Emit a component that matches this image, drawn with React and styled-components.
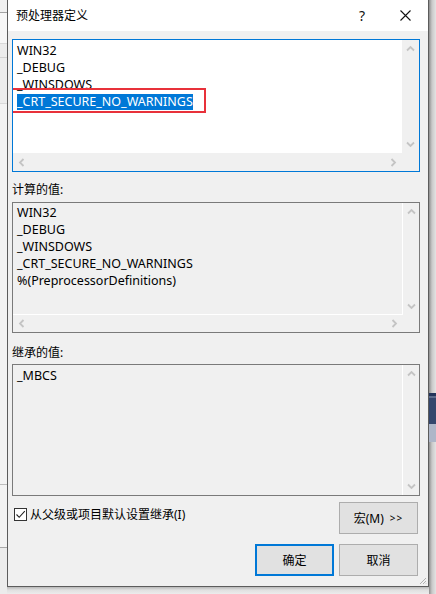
import React from "react";
import styled, { createGlobalStyle } from "styled-components";

const UI_FONT = `"Noto Sans", "Noto Sans CJK SC", sans-serif`;

const GlobalStyle = createGlobalStyle`
  html, body { margin: 0; padding: 0; }
  body { background: #ececec; font-family: ${UI_FONT}; }
  * { box-sizing: border-box; }
`;

const Desktop = styled.div`
  width: 436px;
  height: 594px;
  display: flex;
  overflow: hidden;
  background: #ececec;
`;

const LeftBackdrop = styled.div`
  width: 7px;
  flex: none;
  background: linear-gradient(
    to bottom,
    #f0f0f0 0 12px,
    #a3a3a3 12px 13px,
    #f7f7f7 13px 43px,
    #d9d9d9 43px 44px,
    #ececec 44px 57px,
    #d2d2d2 57px 58px,
    #ececec 58px 103px,
    #d9d9d9 103px 104px,
    #f3f3f3 104px 484px,
    #bdbdbd 484px 485px,
    #f3f3f3 485px 547px,
    #a9a9a9 547px 548px,
    #ececec 548px
  );
`;

const RightBackdrop = styled.div`
  width: 7px;
  flex: none;
  background:
    linear-gradient(
      to bottom,
      transparent 0 393px,
      #22345a 393px 396px,
      #5d6d8c 396px 398px,
      #34466c 398px 424px,
      #aeb6c8 424px 442px,
      transparent 442px
    ),
    linear-gradient(to right, #8e8e8e, #c9c9c9 3px, #e3e3e3);
`;

const DialogColumn = styled.div`
  width: 422px;
  flex: none;
  display: flex;
  flex-direction: column;
`;

const BottomBackdrop = styled.div`
  flex: 1;
  background: linear-gradient(to bottom, #b8b8b8, #e0e0e0 3px, #ececec);
`;

const Dialog = styled.div`
  position: relative;
  height: 587px;
  border: 1px solid #5c5c5c;
  border-top: none;
  background: #f0f0f0;
  display: flex;
  flex-direction: column;
  font-family: ${UI_FONT};
  font-size: 12px;
  color: #000;
`;

const TitleBar = styled.div`
  height: 31px;
  flex: none;
  background: #fff;
  display: flex;
  align-items: center;
  padding-left: 8px;
`;

const TitleText = styled.div`
  flex: 1;
  font-size: 12px;
  line-height: 17px;
  padding-bottom: 1px;
`;

const CaptionButton = styled.div`
  width: ${(p) => p.$w}px;
  height: 31px;
  display: flex;
  align-items: center;
  justify-content: center;
  font-size: 14px;
  color: #111;
`;

const Content = styled.div`
  flex: 1;
  display: flex;
  flex-direction: column;
  padding: 8px 8px 10px 4px;
`;

const Box = styled.div`
  height: ${(p) => p.$h}px;
  flex: none;
  border: 1px solid ${(p) => (p.$active ? "#0078d7" : "#7a7a7a")};
  background: ${(p) => (p.$active ? "#fff" : "#f0f0f0")};
  display: grid;
  grid-template-columns: 1fr ${(p) => (p.$active ? 17 : 16)}px;
  grid-template-rows: ${(p) => (p.$hscroll ? `1fr ${p.$active ? 18 : 17}px` : "1fr")};
`;

const TextArea = styled.div`
  padding: ${(p) => p.$top}px 0 0 4px;
  line-height: 17px;
  font-size: 12.5px;
  white-space: pre;
  overflow: hidden;
  background: ${(p) => (p.$active ? "#fff" : "#f0f0f0")};
  border-right: ${(p) => (p.$active ? "none" : "1px solid #fff")};
  border-bottom: ${(p) => (p.$active || !p.$hscroll ? "none" : "1px solid #fff")};
`;

const Line = styled.div`
  position: relative;
  height: 17px;
`;

const Selected = styled.span`
  display: inline-block;
  background: #0078d7;
  color: #fff;
  line-height: 16px;
  margin-top: 1px;
`;

const Annotation = styled.div`
  position: absolute;
  left: -8px;
  top: -5px;
  width: 197px;
  height: 25px;
  border: 2px solid #e8313a;
  pointer-events: none;
`;

const VScroll = styled.div`
  background: #f0f0f0;
  display: flex;
  flex-direction: column;
  justify-content: space-between;
`;

const HScroll = styled.div`
  background: #f0f0f0;
  display: flex;
  justify-content: space-between;
`;

const Corner = styled.div`
  background: #f0f0f0;
`;

const ArrowCell = styled.div`
  width: ${(p) => (p.$horizontal ? "17px" : "100%")};
  height: ${(p) => (p.$horizontal ? "100%" : "17px")};
  display: flex;
  align-items: center;
  justify-content: center;
`;

const FieldLabel = styled.div`
  line-height: 17px;
  font-size: 12px;
  margin: ${(p) => p.$mt}px 0 ${(p) => p.$mb}px 0;
`;

const OptionsRow = styled.div`
  margin-top: 6px;
  display: flex;
  align-items: flex-start;
  justify-content: space-between;
  padding-right: 2px;
`;

const CheckLabel = styled.label`
  display: flex;
  align-items: center;
  gap: 3px;
  margin-top: 6px;
  margin-left: 2px;
  line-height: 13px;
  font-size: 12px;
`;

const CheckBox = styled.span`
  width: 13px;
  height: 13px;
  border: 1px solid #333;
  background: #fff;
  display: flex;
  align-items: center;
  justify-content: center;
`;

const Button = styled.div`
  width: 79px;
  height: 32px;
  border: ${(p) => (p.$default ? "2px solid #0078d7" : "1px solid #adadad")};
  background: #e1e1e1;
  display: flex;
  align-items: center;
  justify-content: center;
  font-size: 12px;
  gap: 6px;
`;

const Chevrons = styled.span`
  font-size: 10px;
  letter-spacing: 1px;
`;

const ButtonRow = styled.div`
  margin-top: 10px;
  display: flex;
  justify-content: flex-end;
  gap: 5px;
  padding-right: 2px;
`;

const Grip = styled.svg`
  position: absolute;
  right: 1px;
  bottom: 1px;
`;

const ARROW = "#c4c4c4";

const Arrow = ({ dir }) => {
  const pts = {
    up: "1,5.5 4.5,2 8,5.5",
    down: "1,1.5 4.5,5 8,1.5",
    left: "5.5,1 2,4.5 5.5,8",
    right: "1.5,1 5,4.5 1.5,8",
  }[dir];
  const horiz = dir === "left" || dir === "right";
  return (
    <svg width={horiz ? 7 : 9} height={horiz ? 9 : 7} viewBox={horiz ? "0 0 7 9" : "0 0 9 7"}>
      <polyline points={pts} fill="none" stroke={ARROW} strokeWidth="1.8" />
    </svg>
  );
};

function ListBox({ h, active, hscroll, top, children }) {
  return (
    <Box $h={h} $active={active} $hscroll={hscroll}>
      <TextArea $top={top} $active={active} $hscroll={hscroll}>
        {children}
      </TextArea>
      <VScroll>
        <ArrowCell>
          <Arrow dir="up" />
        </ArrowCell>
        <ArrowCell>
          <Arrow dir="down" />
        </ArrowCell>
      </VScroll>
      {hscroll && (
        <>
          <HScroll>
            <ArrowCell $horizontal>
              <Arrow dir="left" />
            </ArrowCell>
            <ArrowCell $horizontal>
              <Arrow dir="right" />
            </ArrowCell>
          </HScroll>
          <Corner />
        </>
      )}
    </Box>
  );
}

const computed = [
  "WIN32",
  "_DEBUG",
  "_WINSDOWS",
  "_CRT_SECURE_NO_WARNINGS",
  "%(PreprocessorDefinitions)",
];

export default function App() {
  return (
    <>
      <GlobalStyle />
      <Desktop>
        <LeftBackdrop />
        <DialogColumn>
          <Dialog>
            <TitleBar>
              <TitleText>预处理器定义</TitleText>
              <CaptionButton $w={40}>?</CaptionButton>
              <CaptionButton $w={46}>
                <svg width="11" height="11" viewBox="0 0 11 11">
                  <path d="M0.5 0.5 L10.5 10.5 M10.5 0.5 L0.5 10.5" stroke="#111" strokeWidth="1.1" />
                </svg>
              </CaptionButton>
            </TitleBar>
            <Content>
              <ListBox h={133} active hscroll top={2}>
                <Line>WIN32</Line>
                <Line>_DEBUG</Line>
                <Line>_WINSDOWS</Line>
                <Line>
                  <Selected>_CRT_SECURE_NO_WARNINGS</Selected>
                  <Annotation />
                </Line>
              </ListBox>

              <FieldLabel $mt={9} $mb={4}>计算的值:</FieldLabel>
              <ListBox h={131} hscroll top={1}>
                {computed.map((t) => (
                  <Line key={t}>{t}</Line>
                ))}
              </ListBox>

              <FieldLabel $mt={11} $mb={3}>继承的值:</FieldLabel>
              <ListBox h={132} top={2}>
                <Line>_MBCS</Line>
              </ListBox>

              <OptionsRow>
                <CheckLabel>
                  <CheckBox>
                    <svg width="11" height="11" viewBox="0 0 11 11">
                      <polyline points="1.5,5.5 4.2,8.3 9.8,2.2" fill="none" stroke="#222" strokeWidth="1.1" />
                    </svg>
                  </CheckBox>
                  从父级或项目默认设置继承(I)
                </CheckLabel>
                <Button>
                  宏(M)<Chevrons>&gt;&gt;</Chevrons>
                </Button>
              </OptionsRow>

              <ButtonRow>
                <Button $default>确定</Button>
                <Button>取消</Button>
              </ButtonRow>
            </Content>
            <Grip width="8" height="8" viewBox="0 0 8 8">
              <path d="M7 1 L1 7 M7 4 L4 7 M7 6.5 L6.5 7" stroke="#b0b0b0" strokeWidth="1" />
            </Grip>
          </Dialog>
          <BottomBackdrop />
        </DialogColumn>
        <RightBackdrop />
      </Desktop>
    </>
  );
}
